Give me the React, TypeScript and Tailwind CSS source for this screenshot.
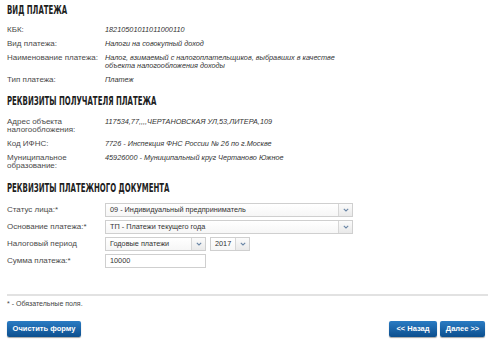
import React from "react";

const heading =
  "inline-block origin-left scale-x-[0.62] whitespace-nowrap text-[12.5px] leading-[12px] font-bold uppercase text-[#1e1e1e] [font-family:'DejaVu_Sans_Condensed','DejaVu_Sans',sans-serif] [font-stretch:condensed]";

const headingWrap = "flex h-[12px] items-center text-[12px] leading-[12px]";

function InfoRow({ label, value }: { label: React.ReactNode; value: React.ReactNode }) {
  return (
    <div className="grid grid-cols-[98px_1fr] leading-[8px]">
      <div className="text-[8px] text-[#4a4a4a]">{label}</div>
      <div className="text-[7.3px] italic text-[#333]">{value}</div>
    </div>
  );
}

function Chevron() {
  return (
    <svg width="6" height="4" viewBox="0 0 6 4" fill="none">
      <polyline points="0.8,0.8 3,3 5.2,0.8" stroke="#6a86a6" strokeWidth="1.1" />
    </svg>
  );
}

function Select({ value, className }: { value: string; className: string }) {
  return (
    <div
      className={`flex h-[14px] items-stretch border border-[#cfcfcf] bg-gradient-to-b from-white to-[#f6f6f6] ${className}`}
    >
      <div className="flex flex-1 items-center pl-[4px] text-[7.3px] text-[#333]">{value}</div>
      <div className="flex w-[14px] items-center justify-center border-l border-[#d6d6d6] bg-gradient-to-b from-[#fbfbfb] to-[#e9e9e9]">
        <Chevron />
      </div>
    </div>
  );
}

function FormRow({ label, children }: { label: string; children: React.ReactNode }) {
  return (
    <div className="grid grid-cols-[98px_1fr] items-center">
      <div className="text-[8px] leading-[10px] text-[#4a4a4a]">{label}</div>
      <div className="flex gap-[3px]">{children}</div>
    </div>
  );
}

function Button({ children, className }: { children: React.ReactNode; className: string }) {
  return (
    <button
      className={`flex h-[16px] items-center justify-center rounded-[2px] bg-gradient-to-b from-[#2a7cc4] to-[#0c4f8e] text-[7.5px] font-bold text-white shadow-[0_1px_1px_rgba(0,0,0,0.35)] ${className}`}
    >
      {children}
    </button>
  );
}

export default function App() {
  return (
    <div className="h-[346px] w-[494px] bg-white px-[7px] pt-[4px] [font-family:'Liberation_Sans',Arial,sans-serif]">
      <div className={headingWrap}>
        <h2 className={heading}>Вид платежа</h2>
      </div>
      <div className="mt-[10px] flex flex-col gap-[6px]">
        <InfoRow label="КБК:" value="18210501011011000110" />
        <InfoRow label="Вид платежа:" value="Налоги на совокупный доход" />
        <InfoRow
          label="Наименование платежа:"
          value={
            <>
              Налог, взимаемый с налогоплательщиков, выбравших в качестве
              <br />
              объекта налогообложения доходы
            </>
          }
        />
        <InfoRow label="Тип платежа:" value="Платеж" />
      </div>

      <div className={`${headingWrap} mt-[11px]`}>
        <h2 className={heading}>Реквизиты получателя платежа</h2>
      </div>
      <div className="mt-[11px] flex flex-col gap-[6px]">
        <InfoRow
          label={
            <>
              Адрес объекта
              <br />
              налогообложения:
            </>
          }
          value="117534,77,,,,ЧЕРТАНОВСКАЯ УЛ,53,ЛИТЕРА,109"
        />
        <InfoRow label="Код ИФНС:" value="7726 - Инспекция ФНС России № 26 по г.Москве" />
        <InfoRow
          label={
            <>
              Муниципальное
              <br />
              образование:
            </>
          }
          value="45926000 - Муниципальный круг Чертаново Южное"
        />
      </div>

      <div className={`${headingWrap} mt-[12px]`}>
        <h2 className={heading}>Реквизиты платежного документа</h2>
      </div>
      <div className="mt-[9px] flex flex-col gap-[3px]">
        <FormRow label="Статус лица:*">
          <Select value="09 - Индивидуальный предприниматель" className="w-[248px]" />
        </FormRow>
        <FormRow label="Основание платежа:*">
          <Select value="ТП - Платежи текущего года" className="w-[248px]" />
        </FormRow>
        <FormRow label="Налоговый период">
          <Select value="Годовые платежи" className="w-[101px]" />
          <Select value="2017" className="ml-[1px] w-[40px]" />
        </FormRow>
        <FormRow label="Сумма платежа:*">
          <div className="flex h-[14px] w-[101px] items-center border border-[#cfcfcf] bg-white pl-[4px] text-[7.3px] text-[#333]">
            10000
          </div>
        </FormRow>
      </div>

      <div className="mt-[26px] h-[2px] w-[481px] bg-[#e2e2e2]" />
      <div className="mt-[4px] text-[7px] leading-[8px] text-[#444]">* - Обязательные поля.</div>

      <div className="mt-[13px] flex w-[478px] items-center">
        <Button className="w-[74px]">Очистить форму</Button>
        <div className="flex-1" />
        <Button className="w-[48px]">&lt;&lt; Назад</Button>
        <Button className="ml-[3px] w-[45px]">Далее &gt;&gt;</Button>
      </div>
    </div>
  );
}
